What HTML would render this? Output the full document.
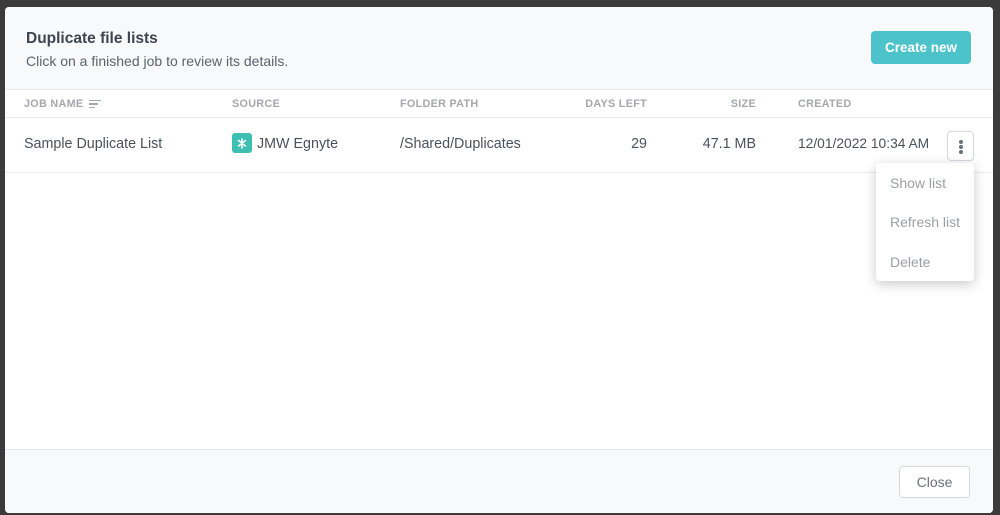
<!DOCTYPE html>
<html><head><meta charset="utf-8"><style>
*{margin:0;padding:0;box-sizing:border-box}
html,body{width:1000px;height:515px;overflow:hidden;background:#3b3b3b;font-family:"Liberation Sans",sans-serif}
.modal{position:absolute;left:5px;top:7px;width:988px;height:506px;background:#fff;border-radius:4px;overflow:hidden}
.hdr{position:absolute;left:0;top:0;width:100%;height:83px;background:#f7f9fa;border-bottom:1px solid #e6e9ec}
.title{position:absolute;left:21px;top:23px;font-size:15.5px;font-weight:bold;color:#3d4550}
.sub{position:absolute;left:21px;top:46px;font-size:14px;color:#5b636d}
.btn{position:absolute;left:866px;top:24px;width:100px;height:33px;background:#4cc3cb;border-radius:4px;color:#fff;font-weight:bold;font-size:13.5px;text-align:center;line-height:33px}
.th{position:absolute;top:91px;font-size:10.8px;font-weight:bold;color:#a3a8ae;letter-spacing:.3px}
.line{position:absolute;left:0;width:100%;height:1px;background:#e9ecee}
.td{position:absolute;top:129px;font-size:14.3px;color:#4a525b}
.r{text-align:right}
.ftr{position:absolute;left:0;top:442px;width:100%;height:64px;background:#f7f9fa;border-top:1px solid #e6e9ec}
.close{position:absolute;left:894px;top:16px;width:71px;height:32px;border:1px solid #d5d9dd;border-radius:4px;background:#fff;color:#6a7179;font-size:14px;text-align:center;line-height:30px}
.kebab{position:absolute;left:942px;top:124px;width:27px;height:30px;border:1px solid #d5d9dd;border-radius:4px;background:#fff}
.kebab i{position:absolute;left:11px;width:4px;height:4px;border-radius:2px;background:#6b7178}
.menu{position:absolute;left:871px;top:156px;width:98px;height:118px;background:#fff;border-radius:4px;box-shadow:0 3px 12px rgba(0,0,0,.22)}
.menu div{position:absolute;left:14px;font-size:14px;color:#9aa0a6}
.ico{position:absolute;left:227px;top:126px;width:20px;height:20px;background:#3dbfb2;border-radius:3px}
</style></head><body>
<div class="modal">
 <div class="hdr">
  <div class="title">Duplicate file lists</div>
  <div class="sub">Click on a finished job to review its details.</div>
  <div class="btn">Create new</div>
 </div>
 <div class="th" style="left:19px">JOB NAME <span style="display:inline-block;vertical-align:middle;margin-left:2px;width:12px"><span style="display:block;height:1.5px;width:12px;background:#a3a8ae;margin-bottom:2px"></span><span style="display:block;height:1.5px;width:9px;background:#a3a8ae;margin-bottom:2px"></span><span style="display:block;height:1.5px;width:6px;background:#a3a8ae"></span></span></div>
 <div class="th" style="left:227px">SOURCE</div>
 <div class="th" style="left:395px">FOLDER PATH</div>
 <div class="th r" style="left:560px;width:82px">DAYS LEFT</div>
 <div class="th r" style="left:680px;width:71px">SIZE</div>
 <div class="th" style="left:793px">CREATED</div>
 <div class="line" style="top:110px"></div>
 <div class="td" style="left:19px">Sample Duplicate List</div>
 <div class="ico"><svg width="20" height="20" viewBox="0 0 20 20"><g stroke="#fff" stroke-width="1.6" fill="none" stroke-linecap="round"><path d="M10 6v9M6.5 7.5L10 10l3.5-2.5M6.5 13L10 10.5l3.5 2.5"/></g></svg></div>
 <div class="td" style="left:252px">JMW Egnyte</div>
 <div class="td" style="left:395px">/Shared/Duplicates</div>
 <div class="td r" style="left:560px;width:82px">29</div>
 <div class="td r" style="left:680px;width:71px">47.1 MB</div>
 <div class="td" style="left:793px;font-size:13.8px">12/01/2022 10:34 AM</div>
 <div class="kebab"><i style="top:8px"></i><i style="top:13px"></i><i style="top:18px"></i></div>
 <div class="line" style="top:165px"></div>
 <div class="menu"><div style="top:12px">Show list</div><div style="top:51px">Refresh list</div><div style="top:91px">Delete</div></div>
 <div class="ftr"><div class="close">Close</div></div>
</div>
</body></html>
